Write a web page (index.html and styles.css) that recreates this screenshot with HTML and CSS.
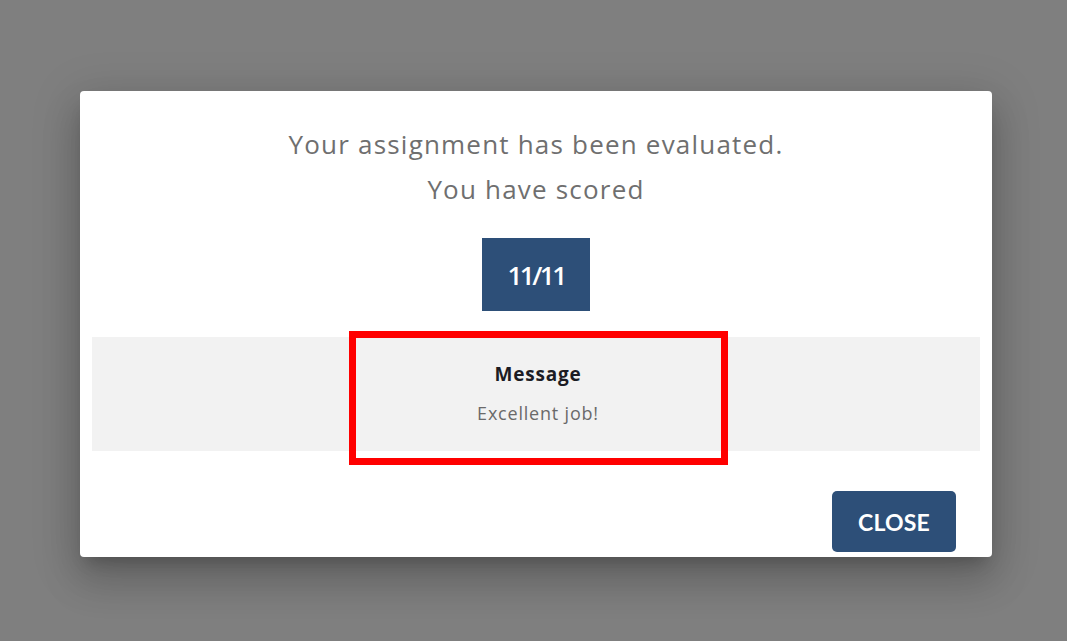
FILE: index.html
```html
<!DOCTYPE html>
<html lang="en">
<head>
<meta charset="utf-8">
<title>Assignment evaluated</title>
<link rel="stylesheet" href="styles.css">
</head>
<body>
<div class="backdrop">
  <div class="dialog">
    <div class="dialog-body">
      <p class="lead">Your assignment has been evaluated.<br>You have scored</p>
      <div class="score">11/11</div>
      <div class="message-band">
        <div class="message">
          <div class="message-title">Message</div>
          <div class="message-text">Excellent job!</div>
        </div>
      </div>
    </div>
    <div class="dialog-actions">
      <button class="close-btn" type="button">CLOSE</button>
    </div>
  </div>
</div>
</body>
</html>
```
FILE: styles.css
```css
* { box-sizing: border-box; }
html, body {
  margin: 0;
  height: 100%;
}
body {
  background: #7f7f7f;
  font-family: "Open Sans", "Lato", sans-serif;
}
.backdrop {
  width: 100%;
  height: 100%;
  padding: 91px 0 0 80px;
}
.dialog {
  width: 912px;
  height: 466px;
  background: #ffffff;
  border-radius: 4px;
  box-shadow: 0 11px 15px -7px rgba(0,0,0,.2), 0 24px 38px 3px rgba(0,0,0,.14), 0 9px 46px 8px rgba(0,0,0,.12);
  padding: 0 12px;
  display: flex;
  flex-direction: column;
}
.dialog-body {
  display: flex;
  flex-direction: column;
  align-items: center;
  padding-top: 31px;
}
.lead {
  margin: 0;
  text-align: center;
  color: #6f6f6f;
  font-size: 26px;
  line-height: 45px;
  letter-spacing: 1.2px;
}
.score {
  margin-top: 26px;
  width: 108px;
  height: 73px;
  background: #2d4f78;
  color: #ffffff;
  font-size: 26px;
  font-weight: 600;
  letter-spacing: -2.5px;
  display: flex;
  align-items: center;
  justify-content: center;
}
.message-band {
  margin-top: 26px;
  align-self: stretch;
  height: 114px;
  background: #f2f2f2;
  display: flex;
  justify-content: center;
}
.message {
  width: 379px;
  height: 134px;
  margin-top: -6px;
  border: 7px solid #ff0000;
  display: flex;
  flex-direction: column;
  align-items: center;
  padding-top: 22px;
  position: relative;
  left: 2px;
}
.message-title {
  font-size: 19px;
  font-weight: 700;
  color: #1c1c24;
  line-height: 28px;
  letter-spacing: 0.8px;
}
.message-text {
  margin-top: 12px;
  font-size: 18px;
  color: #6a6a6a;
  line-height: 26px;
  letter-spacing: 0.8px;
}
.dialog-actions {
  margin-top: auto;
  display: flex;
  justify-content: flex-end;
  padding: 0 24px 5px 0;
}
.close-btn {
  width: 124px;
  height: 61px;
  border: none;
  border-radius: 5px;
  background: #2d4f78;
  color: #ffffff;
  font-family: "Lato", sans-serif;
  font-size: 23px;
  font-weight: 700;
  letter-spacing: 0.2px;
}
```
